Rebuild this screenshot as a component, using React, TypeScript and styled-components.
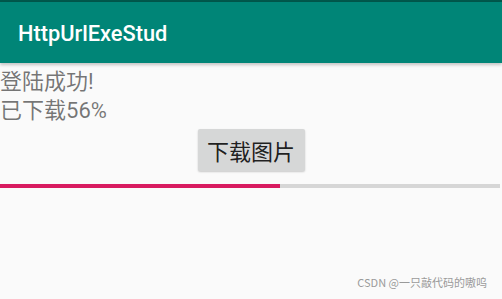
import React from "react";
import styled, { createGlobalStyle } from "styled-components";

const Global = createGlobalStyle`
  html, body { margin: 0; padding: 0; background: #fafafa; }
  body { font-family: Roboto, "Noto Sans CJK SC", sans-serif; }
  * { box-sizing: border-box; }
`;

const Screen = styled.div`
  position: relative;
  width: 502px;
  height: 299px;
  background: #fafafa;
  overflow: hidden;
  display: flex;
  flex-direction: column;
`;

const StatusStrip = styled.div`
  height: 2px;
  background: #00574b;
`;

const AppBar = styled.div`
  height: 61px;
  background: #008577;
  display: flex;
  align-items: center;
  padding-left: 18px;
  padding-top: 1px;
  box-shadow: 0 2px 3px rgba(0, 0, 0, 0.22);
  position: relative;
  z-index: 1;
`;

const Title = styled.div`
  color: #ffffff;
  font-family: Roboto, sans-serif;
  font-weight: 500;
  font-size: 21.8px;
`;

const Content = styled.div`
  display: flex;
  flex-direction: column;
  padding-top: 4px;
`;

const Line = styled.div`
  font-family: Roboto, "Noto Sans CJK SC", sans-serif;
  font-size: 22px;
  line-height: 29px;
  color: rgba(0, 0, 0, 0.54);
  white-space: nowrap;
`;

const ButtonRow = styled.div`
  display: flex;
  justify-content: center;
  margin-top: 4px;
`;

const Button = styled.button`
  width: 107px;
  height: 42px;
  border: none;
  border-radius: 2px;
  background: #d6d7d7;
  color: rgba(0, 0, 0, 0.87);
  font-family: Roboto, "Noto Sans CJK SC", sans-serif;
  font-size: 22px;
  padding: 0;
  box-shadow: 0 1px 2px rgba(0, 0, 0, 0.2);
`;

const Track = styled.div`
  margin-top: 13px;
  margin-right: 2px;
  height: 4px;
  background: #d6d6d6;
  display: flex;
`;

const Fill = styled.div`
  height: 100%;
  background: #d81b60;
`;

const Watermark = styled.div`
  position: absolute;
  right: 15px;
  bottom: 9px;
  font-family: "Noto Sans CJK SC", sans-serif;
  font-size: 11px;
  color: #9a9a9a;
  white-space: nowrap;
`;

export default function App() {
  const progress = 56;
  return (
    <>
      <Global />
      <Screen>
        <StatusStrip />
        <AppBar>
          <Title>HttpUrlExeStud</Title>
        </AppBar>
        <Content>
          <Line>登陆成功!</Line>
          <Line>已下载{progress}%</Line>
          <ButtonRow>
            <Button>下载图片</Button>
          </ButtonRow>
          <Track>
            <Fill style={{ width: `${progress}%` }} />
          </Track>
        </Content>
        <Watermark>CSDN @一只敲代码的嗷呜</Watermark>
      </Screen>
    </>
  );
}
